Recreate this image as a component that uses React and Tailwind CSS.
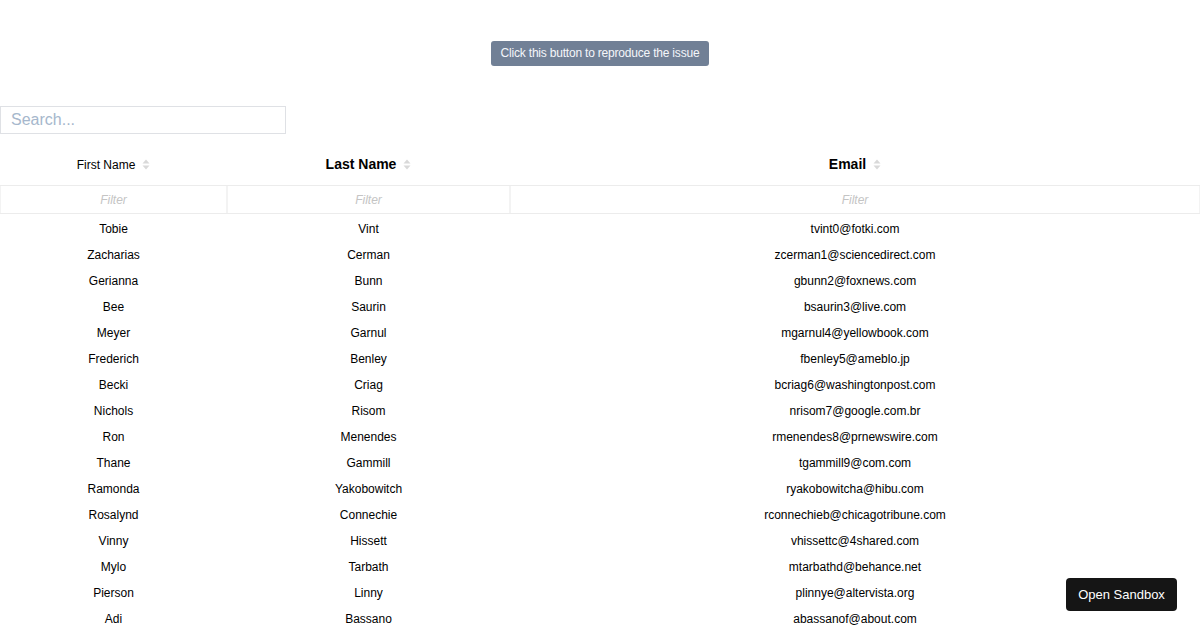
import React from "react";

const rows = [
  ["Tobie", "Vint", "tvint0@fotki.com"],
  ["Zacharias", "Cerman", "zcerman1@sciencedirect.com"],
  ["Gerianna", "Bunn", "gbunn2@foxnews.com"],
  ["Bee", "Saurin", "bsaurin3@live.com"],
  ["Meyer", "Garnul", "mgarnul4@yellowbook.com"],
  ["Frederich", "Benley", "fbenley5@ameblo.jp"],
  ["Becki", "Criag", "bcriag6@washingtonpost.com"],
  ["Nichols", "Risom", "nrisom7@google.com.br"],
  ["Ron", "Menendes", "rmenendes8@prnewswire.com"],
  ["Thane", "Gammill", "tgammill9@com.com"],
  ["Ramonda", "Yakobowitch", "ryakobowitcha@hibu.com"],
  ["Rosalynd", "Connechie", "rconnechieb@chicagotribune.com"],
  ["Vinny", "Hissett", "vhissettc@4shared.com"],
  ["Mylo", "Tarbath", "mtarbathd@behance.net"],
  ["Pierson", "Linny", "plinnye@altervista.org"],
  ["Adi", "Bassano", "abassanof@about.com"],
];

function SortIcon() {
  return (
    <svg width="8" height="11" viewBox="0 0 8 11" className="ml-[7px]">
      <path d="M4 0.5 L7.5 4.5 L0.5 4.5 Z" fill="#d9d9d9" />
      <path d="M4 10.5 L7.5 6.5 L0.5 6.5 Z" fill="#d9d9d9" />
    </svg>
  );
}

const cols = ["w-[227px]", "w-[283px]", "flex-1"];

export default function App() {
  return (
    <div className="relative min-h-[630px] bg-white text-black" style={{ fontFamily: '"Liberation Sans", Arial, sans-serif' }}>
      <div className="flex justify-center pt-[41px]">
        <button className="h-[25px] w-[218px] rounded-[3px] bg-[#718096] pb-[2px] text-[12px] tracking-[-0.2px] text-[#f4f6fa]">
          Click this button to reproduce the issue
        </button>
      </div>
      <div className="mt-[40px]">
        <input
          className="h-[28px] w-[286px] border border-[#dfe1e5] px-[10px] text-[16px] outline-none placeholder:text-[#a6b7cc]"
          placeholder="Search..."
        />
      </div>
      <div className="mt-[10px] flex h-[41px] items-center">
        <div className={`${cols[0]} flex items-center justify-center text-[12px]`}>
          First Name <SortIcon />
        </div>
        <div className={`${cols[1]} flex items-center justify-center text-[14px] font-bold`}>
          Last Name <SortIcon />
        </div>
        <div className={`${cols[2]} flex items-center justify-center text-[14px] font-bold`}>
          Email <SortIcon />
        </div>
      </div>
      <div className="flex h-[29px] border-y border-[#ececec]">
        {cols.map((c, i) => (
          <div key={i} className={`${c} border-x border-[#f3f3f3] flex items-center justify-center`}>
            <span className="text-[12px] italic text-[#c4c4c4]">Filter</span>
          </div>
        ))}
      </div>
      <div className="pt-[2px]">
        {rows.map((r, i) => (
          <div key={i} className="flex h-[26px] items-center text-[12px]">
            <div className={`${cols[0]} text-center`}>{r[0]}</div>
            <div className={`${cols[1]} text-center`}>{r[1]}</div>
            <div className={`${cols[2]} text-center`}>{r[2]}</div>
          </div>
        ))}
      </div>
      <button className="fixed bottom-[19px] right-[23px] h-[33px] w-[111px] rounded-[4px] bg-[#151515] text-[13px] text-white">
        Open Sandbox
      </button>
    </div>
  );
}
